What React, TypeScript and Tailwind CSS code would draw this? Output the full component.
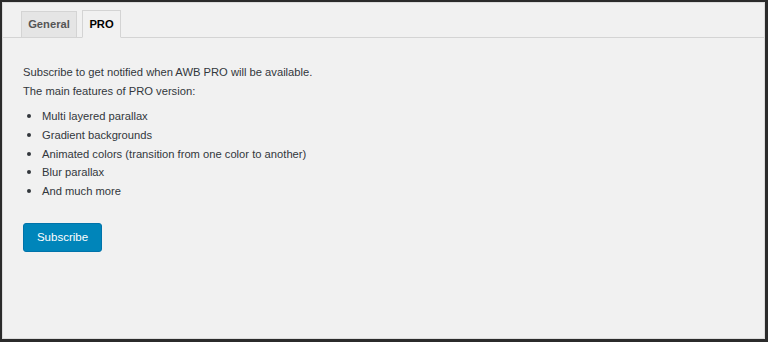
export default function App() {
  const features = [
    'Multi layered parallax',
    'Gradient backgrounds',
    'Animated colors (transition from one color to another)',
    'Blur parallax',
    'And much more',
  ]

  return (
    <div className="h-[342px] w-[768px] overflow-hidden border-t-2 border-l-2 border-r-[3px] border-b-[3px] border-[#2b2b2b] bg-[#f1f1f1] font-['Liberation_Sans',Arial,sans-serif] text-[11.2px] text-[#32373c]">
      <div className="h-full border border-[#dcdcdc]">
        <div className="flex h-[35px] items-end gap-[5px] border-b border-[#d4d4d4] pl-[18px] text-[11.2px]">
          <div className="-mb-px flex h-[27px] w-[56px] items-center justify-center border border-[#d4d4d4] bg-[#e5e5e5] font-semibold text-[#555]">
            General
          </div>
          <div className="-mb-px flex h-[28px] w-[39px] items-center justify-center border border-b-[#f1f1f1] border-[#d4d4d4] bg-[#f1f1f1] font-semibold text-black">
            PRO
          </div>
        </div>

        <div className="pl-[20px] pt-[25px]">
          <p className="leading-[19px]">Subscribe to get notified when AWB PRO will be available.</p>
          <p className="leading-[19px]">The main features of PRO version:</p>
          <ul className="mt-[6px] list-disc pl-[19px] leading-[18.75px] marker:text-[13px]">
            {features.map((f) => (
              <li key={f}>{f}</li>
            ))}
          </ul>
          <button className="mt-[22px] h-[29px] w-[79px] rounded-[3px] border border-[#0073aa] bg-[#0085ba] text-[11.5px] text-white">
            Subscribe
          </button>
        </div>
      </div>
    </div>
  )
}
